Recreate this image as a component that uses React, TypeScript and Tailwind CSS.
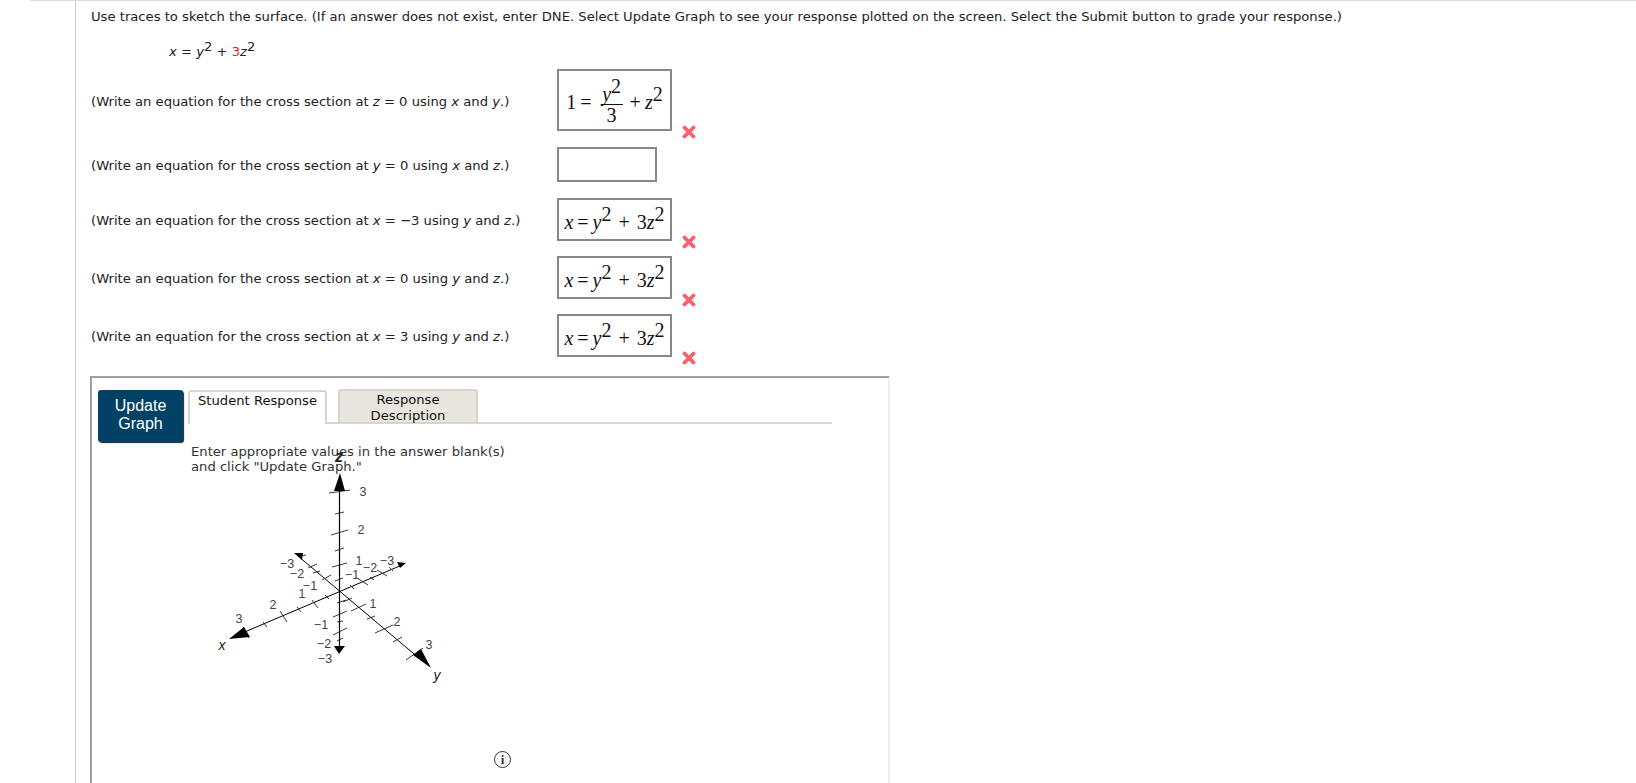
import type { ReactNode } from "react";

const uiFont = "font-['DejaVu_Sans','Noto_Sans',sans-serif]";
const mathFont = "font-['Liberation_Serif',serif]";

function Var({ children }: { children: ReactNode }) {
  return <i className="font-['DejaVu_Sans',sans-serif] italic">{children}</i>;
}

function Sup({ children }: { children: ReactNode }) {
  return <span className="align-[8px] leading-none">{children}</span>;
}

function WrongMark() {
  return (
    <svg viewBox="0 0 14 14" className="ml-[10px] mb-[-8px] h-[14px] w-[14px] shrink-0">
      <path d="M2.5 2.5 L11.5 11.5 M11.5 2.5 L2.5 11.5" stroke="#f7606c" strokeWidth="3.8" strokeLinecap="round" />
    </svg>
  );
}

function TraceAnswer() {
  return (
    <div className={`${mathFont} flex h-[43px] w-[115px] items-center justify-center border-2 border-[#888] pb-[4px] text-[20px] leading-none whitespace-nowrap text-[#111]`}>
      <span>
        <i>x</i>
        <span className="mx-[4px]">=</span>
        <i>y</i>
        <Sup>2</Sup>
        <span className="mx-[7px]">+</span>
        3<i>z</i>
        <Sup>2</Sup>
      </span>
    </div>
  );
}

const traceRows: { label: ReactNode; mt: string; pt: string }[] = [
  { label: <>= −3 using <Var>y</Var> and <Var>z</Var>.)</>, mt: "mt-[16px]", pt: "pt-[1px]" },
  { label: <>= 0 using <Var>y</Var> and <Var>z</Var>.)</>, mt: "mt-[15px]", pt: "pt-[2px]" },
  { label: <>= 3 using <Var>y</Var> and <Var>z</Var>.)</>, mt: "mt-[15px]", pt: "pt-[2px]" },
];

type Seg = [number, number, number, number];

// axis ticks, read off the reference in page pixels
const ticks: Seg[] = [
  [329, 493, 350, 490], [335, 514, 344, 512], [331, 535, 348, 530], [335, 551, 344, 548],
  [332, 567, 347, 563], [335, 581, 343, 578], [337, 603, 346, 600], [333, 617, 347, 611],
  [337, 622, 343, 621], [333, 635, 347, 628], [337, 641, 343, 638],
  [243, 627, 249, 638], [263, 622, 267, 627], [280, 611, 287, 622], [297, 607, 301, 612],
  [312, 600, 318, 608], [325, 595, 329, 599], [350, 585, 354, 589], [357, 578, 368, 585],
  [370, 577, 374, 580], [377, 570, 387, 576], [389, 567, 393, 571],
  [300, 556, 306, 555], [308, 568, 317, 564], [313, 573, 320, 571], [322, 580, 331, 575],
  [343, 602, 352, 598], [351, 611, 366, 604], [367, 619, 375, 616], [375, 633, 393, 625],
  [393, 642, 402, 637], [406, 660, 423, 648],
];

const labels: [string, number, number][] = [
  ["3", 363, 496], ["2", 361, 534], ["1", 359, 565], ["−1", 321, 629], ["−2", 324, 648], ["−3", 325, 663],
  ["3", 239, 623], ["2", 273, 609], ["1", 302, 598], ["−1", 352, 579], ["−2", 370, 572], ["−3", 387, 565],
  ["1", 373, 608], ["2", 397, 626], ["3", 429, 649], ["−1", 310, 590], ["−2", 297, 578], ["−3", 287, 568],
];

function AxesGraph() {
  return (
    <svg viewBox="200 440 250 250" className="absolute left-[108px] top-[62px] h-[250px] w-[250px]">
      <line x1="339.5" y1="485" x2="339.5" y2="650" stroke="#000" strokeWidth="1.2" />
      <line x1="240" y1="634" x2="402" y2="565" stroke="#000" strokeWidth="1" />
      <line x1="298" y1="556" x2="420" y2="659" stroke="#000" strokeWidth="1" />
      {ticks.map(([x1, y1, x2, y2], i) => (
        <line key={i} x1={x1} y1={y1} x2={x2} y2={y2} stroke="#222" strokeWidth="0.9" />
      ))}
      <polygon points="340,473 334,491 345,491" fill="#000" />
      <polygon points="339,654 334,646 345,646" fill="#000" />
      <polygon points="229,639 244,627 250,637" fill="#000" />
      <polygon points="406,563 397,562 400,568" fill="#000" />
      <polygon points="431,668 413,655 421,649" fill="#000" />
      <polygon points="294,553 303,553 302,560" fill="#000" />
      <g fill="#444" fontSize="12.5" fontFamily="'Liberation Sans', sans-serif" textAnchor="middle">
        {labels.map(([t, x, y], i) => (
          <text key={i} x={x} y={y}>{t}</text>
        ))}
      </g>
      <g fill="#222" fontSize="14" fontStyle="italic" fontFamily="'Liberation Sans', sans-serif" textAnchor="middle">
        <text x="222" y="650">x</text>
        <text x="437" y="680">y</text>
        <text x="339" y="462" fontSize="16" fontWeight="700">z</text>
      </g>
    </svg>
  );
}

export default function App() {
  return (
    <div className={`${uiFont} flex h-screen flex-col overflow-hidden bg-white text-[13.15px] leading-[15px] text-[#222]`}>
      <div className="ml-[30px] h-[1px] shrink-0 bg-[#dcdcdc]" />
      <div className="ml-[75px] flex-1 border-l border-l-[#c8c8c8] pl-[15px]">
        <p className="mt-[8px] whitespace-nowrap">
          Use traces to sketch the surface. (If an answer does not exist, enter DNE. Select Update Graph to see your response plotted on the screen. Select the Submit button to grade your response.)
        </p>
        <p className="mt-[16px] ml-[78px] h-[20px] whitespace-nowrap">
          <Var>x</Var> = <Var>y</Var><span className="align-[5px] leading-none">2</span> + <span className="text-[#d8222c]">3</span><Var>z</Var><span className="align-[5px] leading-none">2</span>
        </p>

        <div className="mt-[9px] flex items-end">
          <div className="flex h-[62px] w-[466px] items-center pt-[2px] whitespace-nowrap">
            <span>(Write an equation for the cross section at <Var>z</Var> = 0 using <Var>x</Var> and <Var>y</Var>.)</span>
          </div>
          <div className={`${mathFont} flex h-[62px] w-[115px] items-center justify-center border-2 border-[#888] text-[20px] leading-none text-[#111]`}>
            <span className="whitespace-nowrap">
              1
              <span className="ml-[4px] mr-[9px]">=</span>
              <span className="inline-flex flex-col items-center align-[8px]">
                <span className="w-[22px] border-b border-b-[#111] text-center whitespace-nowrap"><i>y</i><Sup>2</Sup></span>
                <span className="leading-[20px]">3</span>
              </span>
              <span className="ml-[7px] mr-[4px]">+</span>
              <i>z</i>
              <Sup>2</Sup>
            </span>
          </div>
          <WrongMark />
        </div>

        <div className="mt-[16px] flex items-center">
          <div className="w-[466px] pt-[2px] whitespace-nowrap">
            (Write an equation for the cross section at <Var>y</Var> = 0 using <Var>x</Var> and <Var>z</Var>.)
          </div>
          <div className="h-[35px] w-[100px] border-2 border-[#888]" />
        </div>

        {traceRows.map((row, i) => (
          <div key={i} className={`${row.mt} flex items-end`}>
            <div className={`${row.pt} flex h-[43px] w-[466px] items-center whitespace-nowrap`}>
              <span>(Write an equation for the cross section at <Var>x</Var> {row.label}</span>
            </div>
            <TraceAnswer />
            <WrongMark />
          </div>
        ))}

        <section className="relative mt-[19px] ml-[-1px] h-[420px] w-[800px] border-2 border-[#a0a0a0] border-r-[#eeeeee]">
          <div className="flex h-[53px] items-start pl-[6px] pt-[12px] box-content">
            <button className="h-[52px] w-[85px] rounded-[3px] bg-[#004165] pb-[2px] font-['Liberation_Sans',sans-serif] text-[16px] leading-[18px] text-white shadow-[1px_1px_1px_#222]">
              Update Graph
            </button>
            <div className="ml-[5px] flex h-[34px] w-[644px] items-end border-b-2 border-b-[#d8d5cc]">
              <div className="mb-[-2px] h-[34px] w-[139px] rounded-t-[3px] border-2 border-b-0 border-[#d8d5cc] bg-white pt-[1px] text-center text-[#111]">
                Student Response
              </div>
              <div className="ml-[11px] h-[33px] w-[140px] self-end rounded-t-[3px] border-2 border-b-0 border-[#d8d5cc] bg-[#e9e6e0] pt-[1px] text-center leading-[16px] text-[#111]">
                Response Description
              </div>
            </div>
          </div>
          <p className="mt-[1px] ml-[99px] w-[320px] leading-[15px] text-[#333]">
            Enter appropriate values in the answer blank(s) and click "Update Graph."
          </p>
          <AxesGraph />
          <span className="absolute left-[402px] top-[373px] flex h-[17px] w-[17px] items-center justify-center rounded-full border border-[#333] font-['Liberation_Serif',serif] text-[13px] leading-none font-bold text-[#333]">
            i
          </span>
        </section>
      </div>
    </div>
  );
}
